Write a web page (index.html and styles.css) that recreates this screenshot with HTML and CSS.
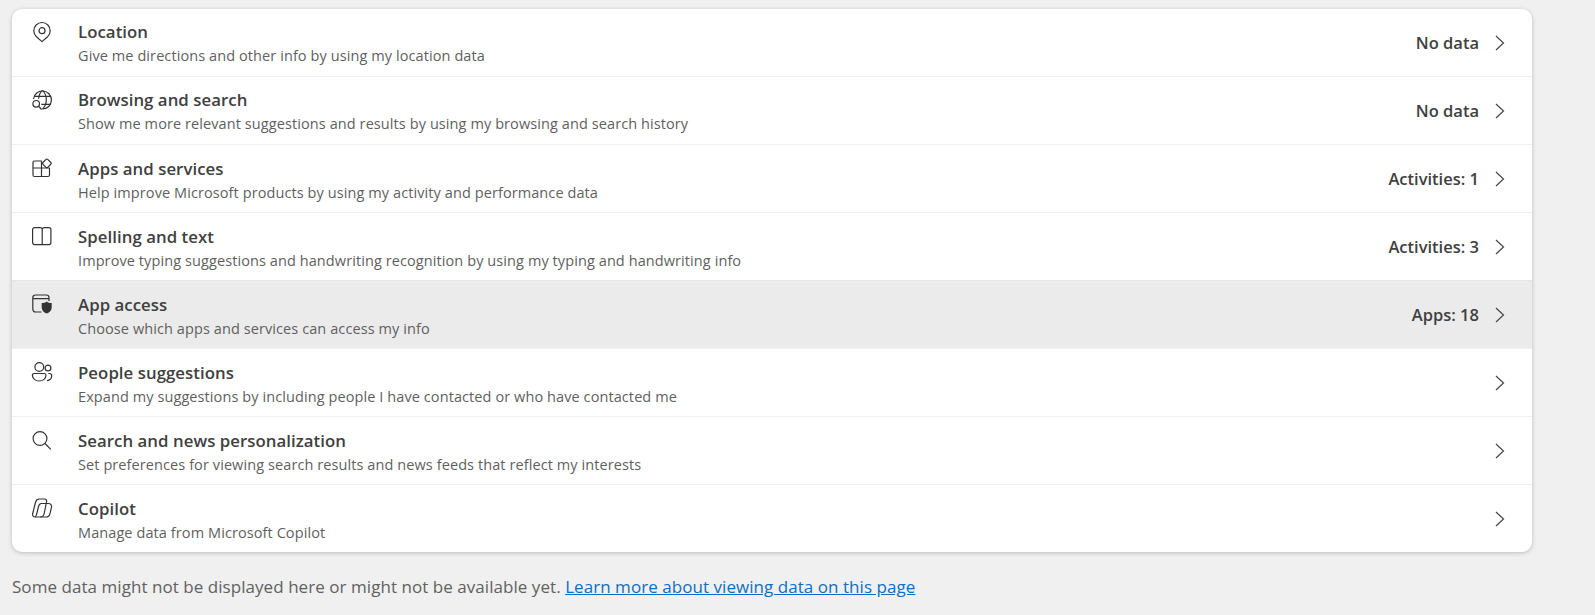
FILE: index.html
```html
<!DOCTYPE html>
<html lang="en">
<head>
<meta charset="utf-8">
<title>Privacy data</title>
<link rel="stylesheet" href="styles.css">
</head>
<body>
<main class="page">
<ul class="card">
<li class="row">
<svg class="icon" viewBox="0 0 20 20"><path d="M10 19.600 4.400 14.700A8.200 8.200 0 1 1 15.600 14.700Z"/><circle cx="10" cy="8.700" r="3"/></svg>
<div class="text"><div class="title">Location</div><div class="desc">Give me directions and other info by using my location data</div></div>
<span class="value">No data</span>
<svg class="chev" viewBox="0 0 10 16"><path d="M1 1l7.500 7L1 15"/></svg>
</li>
<li class="row">
<svg class="icon" viewBox="0 0 20 20"><path d="M1.500 9A9 9 0 1 1 10.500 19"/><path d="M2.300 6.300h16.400M9.300 14.300h9.400M10.500 .4C8 2.600 6.800 5.400 6.600 8.800M10.500 .4c2.700 2.600 3.800 5.600 3.800 9.300s-1.100 6.700-3.800 9.300"/><circle cx="4.200" cy="13.800" r="3.300"/><path d="M6.700 16.300 9.600 19.500"/></svg>
<div class="text"><div class="title">Browsing and search</div><div class="desc">Show me more relevant suggestions and results by using my browsing and search history</div></div>
<span class="value">No data</span>
<svg class="chev" viewBox="0 0 10 16"><path d="M1 1l7.500 7L1 15"/></svg>
</li>
<li class="row">
<svg class="icon" viewBox="0 0 20 20"><path d="M9.500 3H2.500A1.500 1.500 0 0 0 1 4.500V17a1.500 1.500 0 0 0 1.500 1.500H16a1.500 1.500 0 0 0 1.500-1.500V10H9.500V3ZM9.500 10H1M9.500 10v8.500"/><path d="M14 1.400a1.200 1.200 0 0 1 1.700 0l3.100 3.100a1.200 1.200 0 0 1 0 1.700l-3.100 3.100a1.200 1.200 0 0 1-1.700 0l-3.100-3.100a1.200 1.200 0 0 1 0-1.700Z"/></svg>
<div class="text"><div class="title">Apps and services</div><div class="desc">Help improve Microsoft products by using my activity and performance data</div></div>
<span class="value">Activities: 1</span>
<svg class="chev" viewBox="0 0 10 16"><path d="M1 1l7.500 7L1 15"/></svg>
</li>
<li class="row">
<svg class="icon" viewBox="0 0 20 20"><path d="M2.600 1.600h5.600a2 2 0 0 1 2 2v15h-7.600a2 2 0 0 1-2-2v-13a2 2 0 0 1 2-2ZM10.200 3.600a2 2 0 0 1 2-2h4.700a2 2 0 0 1 2 2v13a2 2 0 0 1-2 2h-6.700"/></svg>
<div class="text"><div class="title">Spelling and text</div><div class="desc">Improve typing suggestions and handwriting recognition by using my typing and handwriting info</div></div>
<span class="value">Activities: 3</span>
<svg class="chev" viewBox="0 0 10 16"><path d="M1 1l7.500 7L1 15"/></svg>
</li>
<li class="row active">
<svg class="icon" viewBox="0 0 20 20"><path d="M9.500 18H3.500A2.700 2.700 0 0 1 .8 15.300V3.700A2.700 2.700 0 0 1 3.500 1h10.800A2.700 2.700 0 0 1 17 3.700V7M.8 4.600H17"/><path class="fill" d="M14.700 7.400c1.300 1 2.900 1.600 5 1.600v4.300c0 2.900-1.600 5-5 6.200-3.400-1.200-5-3.300-5-6.200V9c2.100 0 3.700-.6 5-1.600Z"/></svg>
<div class="text"><div class="title">App access</div><div class="desc">Choose which apps and services can access my info</div></div>
<span class="value">Apps: 18</span>
<svg class="chev" viewBox="0 0 10 16"><path d="M1 1l7.500 7L1 15"/></svg>
</li>
<li class="row">
<svg class="icon" viewBox="0 0 20 20"><circle cx="7.300" cy="5" r="4.400"/><circle cx="16" cy="6" r="2.900"/><path d="M2.200 11.500h10a1.800 1.800 0 0 1 1.800 1.800c0 3.200-3 5.700-6.800 5.700S.4 16.500.4 13.300a1.800 1.800 0 0 1 1.800-1.800Z"/><path d="M15 18.600c2.800-.3 4.700-2.300 4.700-4.900 0-1.200-.9-2.200-2-2.200h-1.300"/></svg>
<div class="text"><div class="title">People suggestions</div><div class="desc">Expand my suggestions by including people I have contacted or who have contacted me</div></div>
<svg class="chev" viewBox="0 0 10 16"><path d="M1 1l7.500 7L1 15"/></svg>
</li>
<li class="row">
<svg class="icon" viewBox="0 0 20 20"><circle cx="8" cy="8.500" r="6.900"/><path d="M13 13.500 18.800 19.300"/></svg>
<div class="text"><div class="title">Search and news personalization</div><div class="desc">Set preferences for viewing search results and news feeds that reflect my interests</div></div>
<svg class="chev" viewBox="0 0 10 16"><path d="M1 1l7.500 7L1 15"/></svg>
</li>
<li class="row">
<svg class="icon" viewBox="0 0 20 20"><path d="M7.500 1h5c1.600 0 2.500 1.200 2 3L12.200 15.500C11.700 17.800 10.300 19 8.300 19H3.200C1.200 19 .2 17.500.7 15.500L3.600 4C4.100 2 5.500 1 7.500 1Z"/><path d="M9 5.500h7.500c2.200 0 3.400 1.500 3 3.700l-1.600 6.600c-.5 2.200-1.900 3.200-3.900 3.200H8.300"/><path d="M9.500 5.500C7.800 5.500 7 6.500 6.500 8.500L4.700 16c-.3 1.500-1 2.700-1.500 3"/></svg>
<div class="text"><div class="title">Copilot</div><div class="desc">Manage data from Microsoft Copilot</div></div>
<svg class="chev" viewBox="0 0 10 16"><path d="M1 1l7.500 7L1 15"/></svg>
</li>
</ul>
<p class="note">Some data might not be displayed here or might not be available yet. <a href="#">Learn more about viewing data on this page</a></p>
</main>
</body>
</html>
```
FILE: styles.css
```css
* { box-sizing: border-box; }
html, body { margin: 0; height: 100%; }
body {
  background: #f0f0f0;
  color: #404040;
  font-family: "Open Sans", "Noto Sans", sans-serif;
  overflow: hidden;
}
.page { width: 1532px; padding: 9px 0 0 12px; }
.card {
  list-style: none;
  margin: 0;
  padding: 0;
  background: #fff;
  border-radius: 10px;
  box-shadow: 0 1px 4px rgba(0,0,0,.22);
  overflow: hidden;
}
.row {
  height: 68px;
  display: flex;
  align-items: flex-start;
  padding: 0 27px 0 20px;
  border-top: 1px solid #f0f0f0;
}
.row:first-child { border-top: 0; height: 67px; }
.row.active { background: #ebebeb; border-top-color: #e6e6e6; }
.icon {
  width: 20px;
  height: 20px;
  margin-top: 13px;
  flex: none;
  fill: none;
  stroke: #333;
  stroke-width: 1.200;
  stroke-linejoin: round;
  overflow: visible;
}
.icon .fill { fill: #333; stroke: none; }
.text { flex: 1; margin-left: 26px; padding-top: 12px; }
.row:nth-child(n+3) .text { padding-top: 13px; }
.title { font-size: 16.800px; line-height: 22px; font-weight: 600; letter-spacing: .05px; }
.desc { font-size: 14.500px; line-height: 22px; margin-top: 2px; color: #5f5f5f; letter-spacing: .09px; }
.value { align-self: center; font-size: 16.500px; font-weight: 600; margin-right: 16px; }
.chev {
  align-self: center;
  width: 10px;
  height: 16px;
  flex: none;
  fill: none;
  stroke: #444;
  stroke-width: 1.200;
}
.note { margin: 24px 0 0; font-size: 17px; line-height: 22px; color: #616161; letter-spacing: .05px; }
.note a { color: #106ebe; text-decoration: underline; }
```
